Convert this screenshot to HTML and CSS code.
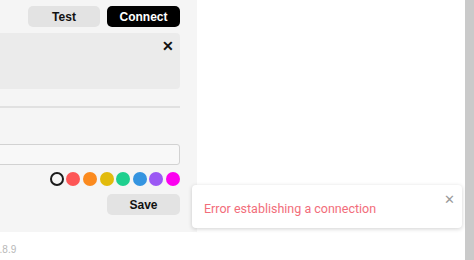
FILE: index.html
```html
<!DOCTYPE html>
<html lang="en">
<head>
    <meta charset="UTF-8">
    <meta name="viewport" content="width=device-width, initial-scale=1.0">
    <title>Connection</title>
    <link rel="stylesheet" href="styles.css">
</head>
<body>
    <div class="layout">
        <div class="sidebar-wrap">
            <div class="sidebar">
                <div class="btn-row">
                    <button class="btn btn-light btn-test">Test</button>
                    <button class="btn btn-dark">Connect</button>
                </div>

                <div class="notice">
                    <span class="notice-close">&#x2715;</span>
                </div>

                <div class="divider"></div>

                <input type="text" class="name-input">

                <div class="colors">
                    <span class="dot dot-none"></span>
                    <span class="dot" style="background:#fd5656"></span>
                    <span class="dot" style="background:#fb8a1e"></span>
                    <span class="dot" style="background:#e2bb0c"></span>
                    <span class="dot" style="background:#1ecf8e"></span>
                    <span class="dot" style="background:#3494e0"></span>
                    <span class="dot" style="background:#9b58f4"></span>
                    <span class="dot" style="background:#fc00f0"></span>
                </div>

                <div class="save-row">
                    <button class="btn btn-light">Save</button>
                </div>
            </div>
            <div class="version">v0.8.9</div>
        </div>

        <div class="main"></div>
        <div class="scrollbar"></div>
    </div>

    <div class="toast">
        <span class="toast-text">Error establishing a connection</span>
        <span class="toast-close">&#x2715;</span>
    </div>
</body>
</html>
```

FILE: styles.css
```css
* {
    margin: 0;
    padding: 0;
    box-sizing: border-box;
}

html, body {
    width: 474px;
    height: 260px;
    overflow: hidden;
    background: #fff;
    font-family: 'Liberation Sans', Arial, sans-serif;
}

.layout {
    display: flex;
    height: 260px;
}

.sidebar-wrap {
    width: 300px;
    margin-left: -103px;
    flex-shrink: 0;
}

.sidebar {
    background: #f5f5f5;
    padding: 6px 17px 17px 16px;
}

.btn-row {
    display: flex;
    justify-content: flex-end;
    gap: 7px;
}

.btn {
    height: 21px;
    width: 73px;
    border: none;
    border-radius: 5px;
    font-family: 'Liberation Sans', Arial, sans-serif;
    font-size: 12px;
    font-weight: bold;
}

.btn-light {
    background: #e3e3e3;
    color: #111;
}

.btn-test {
    width: 72px;
}

.btn-dark {
    background: #000;
    color: #fff;
}

.notice {
    margin-top: 6px;
    height: 56px;
    background: #ebebeb;
    border-radius: 4px;
    display: flex;
    justify-content: flex-end;
    padding: 6px 6px 0 0;
}

.notice-close {
    font-size: 14px;
    font-weight: bold;
    color: #111;
    line-height: 15px;
}

.divider {
    margin-top: 17px;
    height: 2px;
    background: #e1e1e1;
}

.name-input {
    display: block;
    width: 100%;
    margin-top: 36px;
    height: 21px;
    border: 1px solid #d2d2d2;
    border-radius: 3px;
    background: #f8f8f8;
    outline: none;
}

.colors {
    margin-top: 7px;
    display: flex;
    justify-content: flex-end;
    gap: 2.6px;
}

.dot {
    width: 14px;
    height: 14px;
    border-radius: 50%;
}

.dot-none {
    border: 2px solid #1a1a1a;
}

.save-row {
    margin-top: 8px;
    display: flex;
    justify-content: flex-end;
}

.version {
    margin-top: 12px;
    padding-left: 92px;
    font-size: 10px;
    color: #b8b8b8;
}

.main {
    flex: 1;
    background: #fff;
}

.scrollbar {
    width: 9px;
    background: #cacaca;
}

.toast {
    position: absolute;
    left: 192px;
    top: 185px;
    width: 270px;
    height: 43px;
    background: #fff;
    border-radius: 4px;
    box-shadow: 0 1px 4px rgba(0, 0, 0, 0.18);
    display: flex;
    justify-content: space-between;
    padding: 8px 7px 0 12px;
}

.toast-text {
    font-family: Roboto, sans-serif;
    font-size: 12.5px;
    color: #f26d7a;
    margin-top: 8px;
}

.toast-close {
    font-size: 13px;
    color: #9a9a9a;
    line-height: 13px;
}
```
